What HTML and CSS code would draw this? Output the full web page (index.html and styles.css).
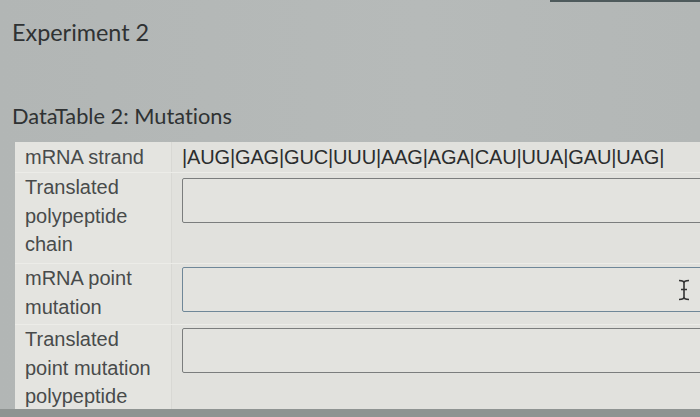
FILE: index.html
```html
<!DOCTYPE html>
<html>
<head>
<meta charset="utf-8">
<link rel="stylesheet" href="styles.css">
</head>
<body>
<div class="screen">
  <div class="topstrip"></div>
  <h1 class="title">Experiment 2</h1>
  <h2 class="subtitle">DataTable 2: Mutations</h2>
  <div class="table">
    <div class="row r1">
      <div class="label">mRNA strand</div>
      <div class="value"><span class="seq">|AUG|GAG|GUC|UUU|AAG|AGA|CAU|UUA|GAU|UAG|</span></div>
    </div>
    <div class="row r2">
      <div class="label">Translated<br>polypeptide<br>chain</div>
      <div class="value"><div class="box"></div></div>
    </div>
    <div class="row r3">
      <div class="label">mRNA point<br>mutation</div>
      <div class="value"><div class="box focus"></div></div>
    </div>
    <div class="row r4">
      <div class="label">Translated<br>point mutation<br>polypeptide</div>
      <div class="value"><div class="box"></div></div>
    </div>
  </div>
  <div class="bottomband"></div>
  <svg class="ibeam" width="14" height="22" viewBox="0 0 14 22">
    <path d="M2 1.5 Q7 1.5 7 4 Q7 1.5 12 1.5 M7 4 V18 M4 10.5 H10 M2 20.5 Q7 20.5 7 18 Q7 20.5 12 20.5" fill="none" stroke="#333" stroke-width="1.6"/>
  </svg>
</div>
</body>
</html>
```
FILE: styles.css
```css
html, body {
  margin: 0;
  padding: 0;
}
body {
  background: #b3b7b6;
  width: 700px;
  height: 417px;
  overflow: hidden;
}
.screen {
  position: relative;
  width: 700px;
  height: 417px;
  display: flex;
  flex-direction: column;
  background: linear-gradient(90deg, #b2b6b5 0%, #b6bab9 60%, #b3b7b6 100%);
}
.topstrip {
  position: absolute;
  top: 0;
  right: 0;
  width: 150px;
  height: 2px;
  background: #4e5a5c;
}
.title {
  margin: 18px 0 0 12px;
  font-family: Lato, "Open Sans", sans-serif;
  font-weight: 400;
  font-size: 23.4px;
  line-height: 28px;
  color: #2f3233;
  font-variant-ligatures: none;
}
.subtitle {
  margin: 57px 0 0 12px;
  font-family: Lato, "Open Sans", sans-serif;
  font-weight: 400;
  font-size: 21.8px;
  line-height: 26px;
  color: #2f3233;
  font-variant-ligatures: none;
}
.table {
  margin: 13px 0 0 15px;
  width: 720px;
  background: #e2e2de;
  display: flex;
  flex-direction: column;
  font-family: "Liberation Sans", Arial, sans-serif;
}
.row {
  display: grid;
  grid-template-columns: 157px 1fr;
  border-top: 1px solid #ecece8;
}
.row:first-child {
  border-top: none;
}
.r1 { height: 30px; }
.r2 { height: 90px; }
.r3 { height: 60px; }
.r4 { height: 84px; }
.label {
  padding-left: 10px;
  font-size: 20px;
  line-height: 28.5px;
  color: #484b4b;
  background: #e4e4e0;
  border-right: 1px solid #d8d8d4;
}
.r1 .label {
  line-height: 30px;
}
.value {
  padding: 0 0 0 10px;
  background: #e1e1dd;
}
.seq {
  display: block;
  font-size: 20px;
  line-height: 30px;
  color: #2b2d2e;
  letter-spacing: -0.15px;
}
.box {
  margin-top: 5px;
  height: 43px;
  border: 1px solid #7b7d7d;
  border-radius: 2px;
  background: #e3e3df;
}
.r3 .box {
  margin-top: 3px;
  border-color: #6f8798;
}
.r4 .box {
  margin-top: 3px;
}
.bottomband {
  flex: 1;
  background: #8f9492;
}
.ibeam {
  position: absolute;
  left: 677px;
  top: 279px;
}
```
